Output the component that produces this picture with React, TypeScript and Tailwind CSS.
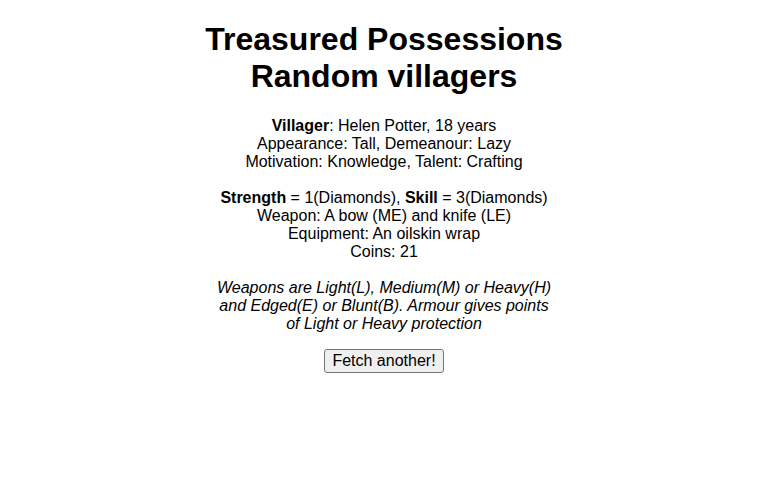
import { useState } from 'react'

type Villager = {
  name: string
  age: number
  appearance: string
  demeanour: string
  motivation: string
  talent: string
  strength: string
  skill: string
  weapon: string
  equipment: string
  coins: number
}

const villager: Villager = {
  name: 'Helen Potter',
  age: 18,
  appearance: 'Tall',
  demeanour: 'Lazy',
  motivation: 'Knowledge',
  talent: 'Crafting',
  strength: '1(Diamonds)',
  skill: '3(Diamonds)',
  weapon: 'A bow (ME) and knife (LE)',
  equipment: 'An oilskin wrap',
  coins: 21,
}

export default function App() {
  const [v] = useState<Villager>(villager)

  return (
    <div className="min-h-screen bg-white text-black text-center font-['Liberation_Sans',Arial,sans-serif] text-base leading-[18px]">
      <h1 className="pt-[21px] pb-[22px] text-[32px] font-bold leading-[37px]">
        Treasured Possessions
        <br />
        Random villagers
      </h1>

      <p>
        <b>Villager</b>: {v.name}, {v.age} years
        <br />
        Appearance: {v.appearance}, Demeanour: {v.demeanour}
        <br />
        Motivation: {v.motivation}, Talent: {v.talent}
      </p>

      <p className="mt-[18px]">
        <b>Strength</b> = {v.strength}, <b>Skill</b> = {v.skill}
        <br />
        Weapon: {v.weapon}
        <br />
        Equipment: {v.equipment}
        <br />
        Coins: {v.coins}
      </p>

      <p className="mt-[18px] mx-auto max-w-[340px] italic">
        Weapons are Light(L), Medium(M) or Heavy(H) and Edged(E) or Blunt(B). Armour gives points of
        Light or Heavy protection
      </p>

      <div className="mt-[16px]">
        <button className="px-[7px] py-0.5 border border-[#767676] rounded-[3px] bg-[#efefef] leading-[18px] hover:bg-[#e5e5e5]">
          Fetch another!
        </button>
      </div>
    </div>
  )
}
